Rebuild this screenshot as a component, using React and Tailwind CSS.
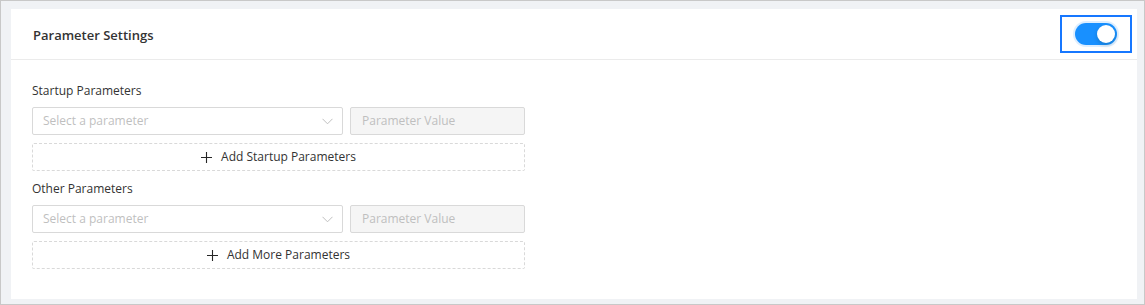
import React, { useState } from 'react'

const font = { fontFamily: '"Open Sans", "Noto Sans", sans-serif' }

function Chevron() {
  return (
    <svg width="11" height="7" viewBox="0 0 11 7" fill="none" className="text-[#bfbfbf]">
      <path d="M0.5 0.8 L5.5 5.8 L10.5 0.8" stroke="currentColor" strokeWidth="1" />
    </svg>
  )
}

function Plus() {
  return (
    <svg width="11" height="11" viewBox="0 0 11 11" fill="none" className="text-[#262626]">
      <path d="M5.5 0 V11 M0 5.5 H11" stroke="currentColor" strokeWidth="1.1" />
    </svg>
  )
}

function ParamGroup({ label, addText }) {
  return (
    <div className="flex flex-col">
      <div className="text-[12px] leading-[16px] text-[#333] mb-2">{label}</div>
      <div className="flex gap-[7px] w-[493px]">
        <div className="flex-1 h-[28px] border border-[#d9d9d9] rounded-[2px] bg-white flex items-center justify-between pl-[10px] pr-[9px]">
          <span className="text-[12px] text-[#bfbfbf]">Select a parameter</span>
          <Chevron />
        </div>
        <div className="w-[175px] h-[28px] border border-[#d9d9d9] rounded-[2px] bg-[#f5f5f5] flex items-center pl-[11px]">
          <span className="text-[12px] text-[#bfbfbf]">Parameter Value</span>
        </div>
      </div>
      <button className="mt-2 w-[493px] h-[28px] border border-dashed border-[#d9d9d9] rounded-[2px] bg-white flex items-center justify-center gap-[9px] text-[12px] text-[#333]">
        <Plus />
        <span>{addText}</span>
      </button>
    </div>
  )
}

export default function App() {
  const [enabled, setEnabled] = useState(true)

  return (
    <div style={font} className="w-[1145px] h-[305px] bg-[#f0f2f5] border border-[#c8c8c8] pl-[10px] pr-[7px] pt-[8px] pb-[5px]">
      <div className="bg-white h-full flex flex-col">
        <header className="h-[51px] flex items-center justify-between pl-[22px] pr-[5px] border-b border-[#ebebeb]">
          <h2 className="text-[13px] font-semibold text-[#333] pt-[3px]">Parameter Settings</h2>
          <div className="border-2 border-[#1677ff] px-[13px] py-[6px]">
            <button
              onClick={() => setEnabled(v => !v)}
              className={`w-[42px] h-[22px] rounded-full flex items-center px-[2px] shadow-[0_0_0_2px_rgba(24,144,255,0.15)] ${enabled ? 'bg-[#1890ff] justify-end' : 'bg-[#bfbfbf] justify-start'}`}
            >
              <span className="w-[18px] h-[18px] rounded-full bg-white shadow-[0_2px_4px_rgba(0,35,11,0.2)]" />
            </button>
          </div>
        </header>
        <div className="pl-[21px] pt-[23px] flex flex-col gap-[10px]">
          <ParamGroup label="Startup Parameters" addText="Add Startup Parameters" />
          <ParamGroup label="Other Parameters" addText="Add More Parameters" />
        </div>
      </div>
    </div>
  )
}
